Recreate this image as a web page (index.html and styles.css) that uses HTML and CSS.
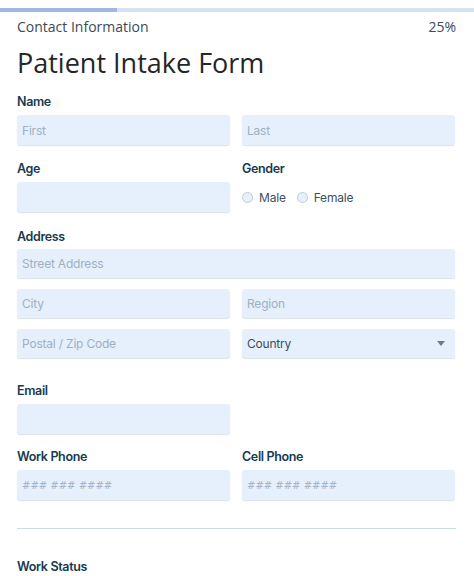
FILE: index.html
```html
<!DOCTYPE html>
<html lang="en">
<head>
<meta charset="utf-8">
<title>Patient Intake Form</title>
<link rel="stylesheet" href="styles.css">
</head>
<body>
<div class="progress"><div class="progress-fill" style="width:117px"></div></div>
<main class="page">
  <div class="step-row">
    <span>Contact Information</span>
    <span>25%</span>
  </div>
  <h1 class="title">Patient Intake Form</h1>

  <div class="field first">
    <div class="label">Name</div>
    <div class="grid2">
      <div class="input ph">First</div>
      <div class="input ph">Last</div>
    </div>
  </div>

  <div class="grid2 field">
    <div>
      <div class="label">Age</div>
      <div class="input"></div>
    </div>
    <div>
      <div class="label">Gender</div>
      <div class="radios">
        <span class="radio"><span class="dot"></span>Male</span>
        <span class="radio"><span class="dot"></span>Female</span>
      </div>
    </div>
  </div>

  <div class="field address">
    <div class="label">Address</div>
    <div class="input ph">Street Address</div>
    <div class="grid2 gap-top">
      <div class="input ph">City</div>
      <div class="input ph">Region</div>
    </div>
    <div class="grid2 gap-top">
      <div class="input ph">Postal / Zip Code</div>
      <div class="input select">Country<svg class="caret" width="8" height="5" viewBox="0 0 8 5"><path d="M0 0h8L4 5z" fill="#6b7b8c"/></svg></div>
    </div>
  </div>

  <div class="grid2 field email">
    <div>
      <div class="label">Email</div>
      <div class="input"></div>
    </div>
  </div>

  <div class="grid2 field phones">
    <div>
      <div class="label">Work Phone</div>
      <div class="input ph mask">### ### ####</div>
    </div>
    <div>
      <div class="label">Cell Phone</div>
      <div class="input ph mask">### ### ####</div>
    </div>
  </div>

  <hr class="divider">

  <div class="label">Work Status</div>
</main>
</body>
</html>
```
FILE: styles.css
```css
html, body {
  margin: 0;
  padding: 0;
  background: #ffffff;
}
body {
  font-family: "Inter", "Liberation Sans", sans-serif;
}
.progress {
  margin-top: 8px;
  height: 4px;
  background: #d6e1f1;
}
.progress-fill {
  height: 100%;
  background: #a2b8e2;
}
.page {
  padding: 0 19px 0 17px;
}
.step-row {
  display: flex;
  justify-content: space-between;
  font-family: "Open Sans", sans-serif;
  font-size: 14px;
  line-height: 20px;
  color: #3c4a58;
  margin-top: 5px;
  margin-right: -1px;
}
.title {
  font-family: "Open Sans", sans-serif;
  font-weight: 400;
  font-size: 27px;
  line-height: 32px;
  color: #262626;
  margin: 10px 0 0;
}
.field {
  margin-top: 16px;
}
.field.first {
  margin-top: 15px;
}
.field.address {
  margin-top: 17px;
}
.field.email {
  margin-top: 25px;
}
.field.phones {
  margin-top: 15px;
}
.grid2 {
  display: grid;
  grid-template-columns: 1fr 1fr;
  column-gap: 12px;
}
.gap-top {
  margin-top: 11px;
}
.label {
  font-family: "Inter", sans-serif;
  font-weight: 600;
  font-size: 12.5px;
  line-height: 16px;
  letter-spacing: -0.35px;
  color: #163a4f;
  margin-bottom: 5px;
}
.address .label {
  margin-bottom: 4px;
}
.input {
  box-sizing: border-box;
  height: 30px;
  background: #e6f0fc;
  border-radius: 3px;
  box-shadow: 0 1px 1px rgba(60, 90, 130, 0.18);
  display: flex;
  align-items: center;
  padding: 0 5px;
  font-family: "Inter", sans-serif;
  font-size: 12px;
  letter-spacing: -0.2px;
  color: #3c4b5c;
}
.address .input {
  height: 29px;
}
.ph {
  color: #9eafc2;
}
.mask {
  font-style: italic;
  font-family: "DejaVu Sans", sans-serif;
  font-size: 10px;
  letter-spacing: 0;
  color: #a6b4c4;
}
.select {
  justify-content: space-between;
  padding-right: 10px;
}
.radios {
  display: flex;
  align-items: center;
  gap: 11px;
  height: 30px;
  font-family: "Inter", sans-serif;
  font-size: 12px;
  letter-spacing: -0.2px;
  color: #3e5063;
}
.radio {
  display: inline-flex;
  align-items: center;
  gap: 6px;
}
.dot {
  box-sizing: border-box;
  width: 11px;
  height: 11px;
  border-radius: 50%;
  border: 1px solid #bccbdb;
  background: #e8f0fb;
}
.divider {
  border: 0;
  border-top: 1px solid #cddbe6;
  margin: 28px -1px 0 0;
}
.divider + .label {
  margin-top: 30px;
}
```
